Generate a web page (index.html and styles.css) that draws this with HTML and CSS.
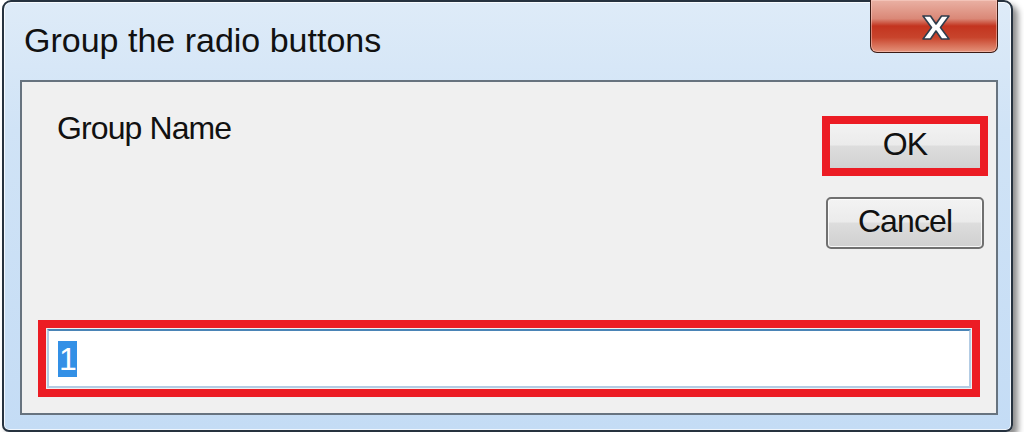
FILE: index.html
```html
<!DOCTYPE html>
<html lang="en">
  <head>
    <meta charset="UTF-8" />
    <meta name="viewport" content="width=device-width, initial-scale=1.0" />
    <title>Group the radio buttons</title>
    <link rel="stylesheet" href="styles.css">
  </head>
  <body>
    <div class="dialog">
      <div class="dialog__titlebar">
        <span class="dialog__title">Group the radio buttons</span>
        <button class="dialog__close" type="button" aria-label="Close">
          <svg viewBox="0 0 28 25" width="28" height="25">
            <polygon
              points="1,1 8.5,1 14,9 19.5,1 27,1 18.5,12.5 27,24 19.5,24 14,16 8.5,24 1,24 9.5,12.5"
              fill="#fff"
              stroke="#2f3d4c"
              stroke-width="1.6"
              stroke-linejoin="round"
            />
          </svg>
        </button>
      </div>
      <div class="dialog__panel">
        <div class="dialog__top">
          <label class="dialog__label" for="group-name">Group Name</label>
          <div class="dialog__buttons">
            <button class="btn mark" type="button">OK</button>
            <button class="btn" type="button">Cancel</button>
          </div>
        </div>
        <div class="field">
          <div class="field__box" id="group-name"><span class="field__sel">1</span></div>
        </div>
      </div>
    </div>
  </body>
</html>
```

FILE: styles.css
```css
* {
  box-sizing: border-box;
  margin: 0;
  padding: 0;
}
:root {
  --mark: #ec1c24;
  --frame-dark: #26323f;
}
body {
  background: #fff;
  font: 34px/1.15 "Liberation Sans", Arial, sans-serif;
  color: #000;
}

/* window frame */
.dialog {
  margin-left: 2px;
  width: 1011px;
  height: 432px;
  display: flex;
  flex-direction: column;
  border: 2px solid var(--frame-dark);
  border-radius: 9px 9px 7px 7px;
  background: linear-gradient(#deebf8, #d0e3f6 30%, #c4dcf5);
  box-shadow: inset 0 0 0 1px rgba(255, 255, 255, 0.75),
    5px 5px 6px rgba(0, 0, 0, 0.45);
}
.dialog__titlebar {
  height: 78px;
  display: flex;
  justify-content: space-between;
  align-items: flex-start;
}
.dialog__title {
  padding: 19px 0 0 20px;
  color: #111;
}
.dialog__close {
  margin: -2px 13px 0 0;
  width: 128px;
  height: 53px;
  display: flex;
  align-items: center;
  justify-content: center;
  padding: 2px 0 0 3px;
  border: 1px solid #3c1a14;
  border-top: 0;
  border-radius: 0 0 7px 7px;
  background: linear-gradient(#eab1a4, #da8877 36%, #c3341f 50%, #c8442c 72%, #e4937b);
  box-shadow: inset 0 0 0 1px rgba(255, 220, 210, 0.45);
}

/* client area */
.dialog__panel {
  flex: 1;
  margin: 0 13px 15px 16px;
  display: flex;
  flex-direction: column;
  padding: 28px 12px 16px 16px;
  border: 2px solid #67737f;
  background: #f0f0f0;
  font-size: 32px;
  letter-spacing: -0.9px;
}
.dialog__top {
  display: flex;
  justify-content: space-between;
  align-items: flex-start;
}
.dialog__label {
  margin-left: 19px;
  color: #111;
}
.dialog__buttons {
  margin-top: 10px;
  display: flex;
  flex-direction: column;
  gap: 25px;
}
.btn {
  width: 158px;
  height: 52px;
  padding-bottom: 4px;
  font: inherit;
  line-height: 1;
  letter-spacing: inherit;
  color: #111;
  border: 2px solid #707070;
  border-radius: 5px;
  background: linear-gradient(#f3f3f3, #ebebeb 48%, #dddddd 50%, #d0d0d0);
  box-shadow: inset 0 0 0 1px rgba(255, 255, 255, 0.8);
}

/* red highlight frame, square cornered, laid over the control */
.mark {
  position: relative;
}
.mark::after {
  content: "";
  position: absolute;
  inset: -6px;
  border: 8px solid var(--mark);
}

/* text box */
.field {
  margin: auto 4px 0 0;
  height: 77px;
  padding: 1px;
  border: 8px solid var(--mark);
}
.field__box {
  height: 100%;
  display: flex;
  align-items: center;
  padding-left: 9px;
  border: 2px solid #b3cce4;
  border-top-color: #4a84b6;
  background: #fff;
}
.field__sel {
  display: block;
  line-height: 36px;
  padding: 0 1px;
  background: #3390e6;
  color: #fff;
}
```
